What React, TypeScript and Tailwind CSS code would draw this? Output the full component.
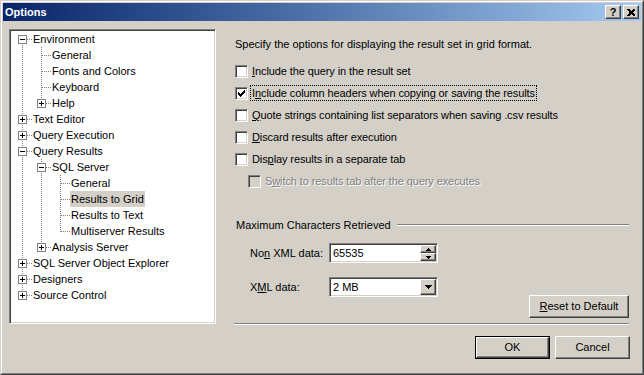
import React from 'react';

type TreeNode = { label: string; level: number; exp?: '+' | '-'; last?: boolean; sel?: boolean };

const TREE: TreeNode[] = [
  { label: 'Environment', level: 0, exp: '-' },
  { label: 'General', level: 1 },
  { label: 'Fonts and Colors', level: 1 },
  { label: 'Keyboard', level: 1 },
  { label: 'Help', level: 1, exp: '+', last: true },
  { label: 'Text Editor', level: 0, exp: '+' },
  { label: 'Query Execution', level: 0, exp: '+' },
  { label: 'Query Results', level: 0, exp: '-' },
  { label: 'SQL Server', level: 1, exp: '-' },
  { label: 'General', level: 2 },
  { label: 'Results to Grid', level: 2, sel: true },
  { label: 'Results to Text', level: 2 },
  { label: 'Multiserver Results', level: 2, last: true },
  { label: 'Analysis Server', level: 1, exp: '+', last: true },
  { label: 'SQL Server Object Explorer', level: 0, exp: '+' },
  { label: 'Designers', level: 0, exp: '+' },
  { label: 'Source Control', level: 0, exp: '+', last: true },
];

const raised =
  'border border-t-white border-l-white border-r-[#404040] border-b-[#404040] shadow-[inset_-1px_-1px_#808080] bg-[#d4d0c8]';
const sunken =
  'border border-t-[#808080] border-l-[#808080] border-r-white border-b-white shadow-[inset_1px_1px_#404040,inset_-1px_-1px_#d4d0c8]';

// column tops of the 7x7 check glyph
const CHECK_COLS = [2, 3, 4, 3, 2, 1, 0];

// one 19x16 cell of tree guide lines
const TreeCell: React.FC<{ up?: boolean; down?: boolean; right?: boolean; exp?: '+' | '-' }> = ({ up, down, right, exp }) => (
  <svg width="19" height="16" className="shrink-0" shapeRendering="crispEdges">
    <g stroke="#808080" strokeDasharray="1 1" fill="none">
      {up && <line x1="9.5" y1="0" x2="9.5" y2={right ? 9 : 16} />}
      {down && <line x1="9.5" y1="8" x2="9.5" y2="16" />}
      {right && <line x1="10" y1="8.5" x2="19" y2="8.5" />}
    </g>
    {exp && (
      <g>
        <rect x="5.5" y="4.5" width="8" height="8" fill="white" stroke="#808080" />
        <line x1="7" y1="8.5" x2="12" y2="8.5" stroke="black" />
        {exp === '+' && <line x1="9.5" y1="6" x2="9.5" y2="11" stroke="black" />}
      </g>
    )}
  </svg>
);

const Tree: React.FC = () => (
  <div className={`w-[207px] h-[295px] bg-white ${sunken} pl-[3px] pt-[1px] shrink-0 overflow-hidden`}>
    {TREE.map((n, i) => {
      const cells: React.ReactNode[] = [];
      for (let c = 0; c < n.level; c++) {
        let anc: TreeNode | undefined;
        for (let j = i - 1; j >= 0; j--) {
          if (TREE[j].level === c) {
            anc = TREE[j];
            break;
          }
        }
        cells.push(<TreeCell key={c} up={!!anc && !anc.last} down={!!anc && !anc.last} />);
      }
      cells.push(<TreeCell key="own" up={!(i === 0)} down={!n.last} right exp={n.exp} />);
      return (
        <div key={i} className="flex h-[16px] items-center">
          {cells}
          <span className={`h-[16px] leading-[16px] px-[1px] whitespace-nowrap ${n.sel ? 'bg-[#d4d0c8]' : ''}`}>{n.label}</span>
        </div>
      );
    })}
  </div>
);

const CheckBox: React.FC<{ checked?: boolean; disabled?: boolean }> = ({ checked, disabled }) => (
  <span className={`w-[13px] h-[13px] shrink-0 flex items-center justify-center ${sunken} ${disabled ? 'bg-[#d4d0c8]' : 'bg-white'}`}>
    {checked && (
      <svg width="7" height="7" shapeRendering="crispEdges">
        {CHECK_COLS.map((top, x) => (
          <rect key={x} x={x} y={top} width="1" height="3" fill="black" />
        ))}
      </svg>
    )}
  </span>
);

const OptionRow: React.FC<{ children: React.ReactNode; checked?: boolean; focus?: boolean; disabled?: boolean; indent?: boolean }> = ({
  children,
  checked,
  focus,
  disabled,
  indent,
}) => (
  <div className={`flex items-center h-[22px] ${indent ? 'pl-[14px]' : 'pl-[1px]'}`}>
    <CheckBox checked={checked} disabled={disabled} />
    <span
      className={`ml-[2px] h-[16px] leading-[14px] px-[1px] border border-dotted whitespace-nowrap tracking-[-0.1px] ${focus ? 'border-black' : 'border-transparent'} ${
        disabled ? 'text-[#808080] [text-shadow:1px_1px_0_#fff]' : ''
      }`}
    >
      {children}
    </span>
  </div>
);

const Button: React.FC<{ children: React.ReactNode; def?: boolean; className?: string }> = ({ children, def, className }) =>
  def ? (
    <div className={`border border-black ${className ?? ''}`}>
      <div className={`${raised} w-full h-full flex items-center justify-center`}>{children}</div>
    </div>
  ) : (
    <div className={`${raised} flex items-center justify-center ${className ?? ''}`}>{children}</div>
  );

const App: React.FC = () => {
  return (
    <div className="w-[644px] h-[375px] font-['Liberation_Sans',Arial,sans-serif] text-[11px] text-black border border-t-[#d4d0c8] border-l-[#d4d0c8] border-r-[#404040] border-b-[#404040] bg-[#d4d0c8] overflow-hidden">
      <div className="w-full h-full border border-t-white border-l-white border-r-[#808080] border-b-[#808080] p-[1px] flex flex-col">
        {/* title bar */}
        <div className="h-[18px] bg-linear-to-r from-[#0a246a] to-[#a6caf0] flex items-center pl-[2px] pr-[2px]">
          <span className="text-white font-bold text-[11px] leading-[18px] flex-1">Options</span>
          <div className={`${raised} w-[16px] h-[14px] flex items-center justify-center`}>
            <span className="font-bold text-[11px] leading-none">?</span>
          </div>
          <div className={`${raised} w-[16px] h-[14px] ml-[2px] flex items-center justify-center`}>
            <svg width="8" height="7" shapeRendering="crispEdges">
              <path d="M0 0h2l2 2 2-2h2v1l-2 2v1l2 2v1h-2l-2-2-2 2h-2v-1l2-2v-1l-2-2z" fill="black" />
            </svg>
          </div>
        </div>

        {/* body */}
        <div className="flex pl-[6px] pt-[8px]">
          <Tree />
          <div className="ml-[18px] w-[396px] flex flex-col">
            <div className="mt-[7px] h-[16px] leading-[16px] pl-[1px]">Specify the options for displaying the result set in grid format.</div>
            <div className="mt-[8px] flex flex-col">
              <OptionRow>
                <u>I</u>nclude the query in the result set
              </OptionRow>
              <OptionRow checked focus>
                I<u>n</u>clude column headers when copying or saving the results
              </OptionRow>
              <OptionRow>
                <u>Q</u>uote strings containing list separators when saving .csv results
              </OptionRow>
              <OptionRow>
                <u>D</u>iscard results after execution
              </OptionRow>
              <OptionRow>
                Dis<u>p</u>lay results in a separate tab
              </OptionRow>
              <OptionRow disabled indent>
                S<u>w</u>itch to results tab after the query executes
              </OptionRow>
            </div>

            <div className="mt-[25px] h-[16px] flex items-center pl-[2px]">
              <span className="whitespace-nowrap">Maximum Characters Retrieved</span>
              <div className="flex-1 ml-[6px] mr-[1px] h-[2px] border-t border-t-[#808080] border-b border-b-white" />
            </div>

            <div className="mt-[10px] h-[20px] flex items-center pl-[16px]">
              <span className="w-[79px]">
                No<u>n</u> XML data:
              </span>
              <div className={`w-[109px] h-[20px] bg-white ${sunken} flex items-center p-[1px]`}>
                <span className="flex-1 pl-[2px]">65535</span>
                <div className="w-[16px] h-[16px] flex flex-col">
                  <div className={`${raised} h-[8px] flex items-center justify-center`}>
                    <svg width="5" height="3" shapeRendering="crispEdges">
                      <path d="M2 0h1v1h1v1h1v1h-5v-1h1v-1h1z" fill="black" />
                    </svg>
                  </div>
                  <div className={`${raised} h-[8px] flex items-center justify-center`}>
                    <svg width="5" height="3" shapeRendering="crispEdges">
                      <path d="M0 0h5v1h-1v1h-1v1h-1v-1h-1v-1h-1z" fill="black" />
                    </svg>
                  </div>
                </div>
              </div>
            </div>

            <div className="mt-[14px] h-[20px] flex items-center pl-[16px]">
              <span className="w-[79px]">
                X<u>M</u>L data:
              </span>
              <div className={`w-[109px] h-[20px] bg-white ${sunken} flex items-center p-[1px]`}>
                <span className="flex-1 pl-[2px]">2 MB</span>
                <div className={`${raised} w-[16px] h-[16px] flex items-center justify-center`}>
                  <svg width="7" height="4" shapeRendering="crispEdges">
                    <path d="M0 0h7v1h-1v1h-1v1h-1v1h-1v-1h-1v-1h-1v-1h-1z" fill="black" />
                  </svg>
                </div>
              </div>
            </div>

            <div className="mt-[-2px] flex justify-end pr-[1px]">
              <Button className="w-[100px] h-[23px]">
                <u>R</u>eset to Default
              </Button>
            </div>

            <div className="mt-[5px] h-[2px] border-t border-t-[#808080] border-b border-b-white mr-[1px]" />

            <div className="mt-[11px] flex justify-end gap-[5px]">
              <Button def className="w-[75px] h-[23px]">
                OK
              </Button>
              <Button className="w-[75px] h-[23px]">Cancel</Button>
            </div>
          </div>
        </div>
      </div>
    </div>
  );
};

export default App;
